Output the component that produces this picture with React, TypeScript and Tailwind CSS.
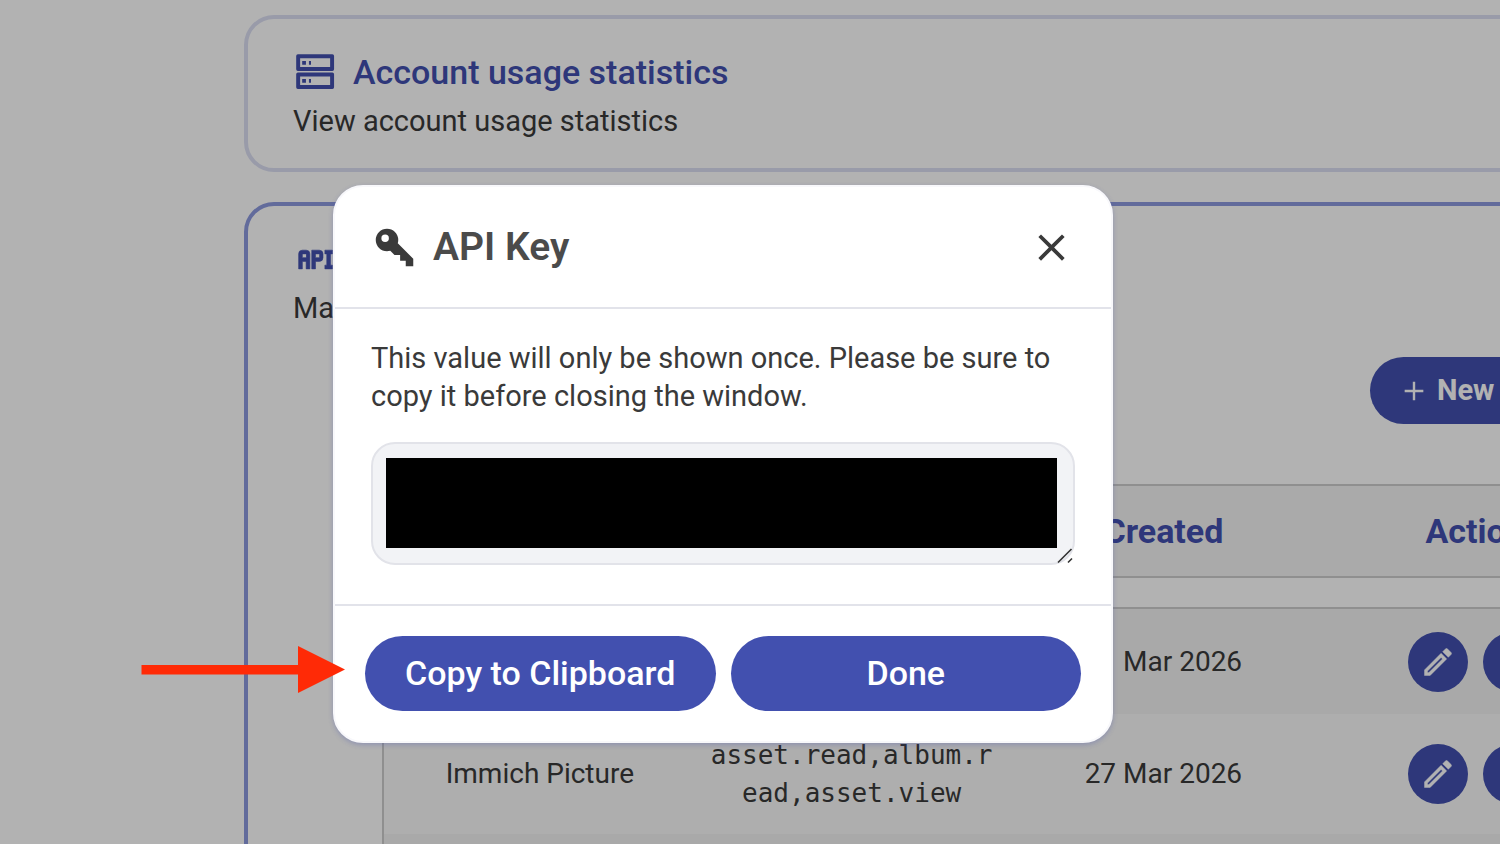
import React from 'react';
import { clsx } from 'clsx';

const ICONS = {
  key: 'M22,18V22H18V19H15V16H12L9.74,13.74C9.19,13.91 8.61,14 8,14A6,6 0 0,1 2,8A6,6 0 0,1 8,2A6,6 0 0,1 14,8C14,8.61 13.91,9.19 13.74,9.74L22,18M7,5A2,2 0 0,0 5,7A2,2 0 0,0 7,9A2,2 0 0,0 9,7A2,2 0 0,0 7,5Z',
  close: 'M19,6.41L17.59,5L12,10.59L6.41,5L5,6.41L10.59,12L5,17.59L6.41,19L12,13.41L17.59,19L19,17.59L13.41,12L19,6.41Z',
  plus: 'M19,12.9H12.9V19H11.1V12.9H5V11.1H11.1V5H12.9V11.1H19V12.9Z',
  pencil: 'M14.06,9L15,9.94L5.92,19H5V18.08L14.06,9M17.66,3C17.41,3 17.15,3.1 16.96,3.29L15.13,5.12L18.88,8.87L20.71,7.04C21.1,6.65 21.1,6 20.71,5.63L18.37,3.29C18.17,3.09 17.92,3 17.66,3M14.06,6.19L3,17.25V21H6.75L17.81,9.94L14.06,6.19Z',
  trash: 'M6,19A2,2 0 0,0 8,21H16A2,2 0 0,0 18,19V7H6V19M8,9H16V19H8V9M15.5,4L14.5,3H9.5L8.5,4H5V6H19V4H15.5Z',
  api: 'M7 7H5A2 2 0 0 0 3 9V17H5V13H7V17H9V9A2 2 0 0 0 7 7M7 11H5V9H7M14 7H10V17H12V13H14A2 2 0 0 0 16 11V9A2 2 0 0 0 14 7M14 11H12V9H14M20 9V15H21V17H17V15H18V9H17V7H21V9Z',
  server: 'M2.6 2.3H21A.9.9 0 0 1 21.9 3.2V10.3A.9.9 0 0 1 21 11.2H2.6A.9.9 0 0 1 1.7 10.3V3.2A.9.9 0 0 1 2.6 2.3M3.8 4.4V9.1H19.8V4.4ZM2.6 12H21A.9.9 0 0 1 21.9 12.9V19.9A.9.9 0 0 1 21 20.8H2.6A.9.9 0 0 1 1.7 19.9V12.9A.9.9 0 0 1 2.6 12M3.8 14.1V18.7H19.8V14.1ZM4.9 5.8H6.9V7.8H4.9ZM8.5 5.8H9.6V7.8H8.5ZM4.9 15.4H6.9V17.4H4.9ZM8.5 15.4H9.6V17.4H8.5Z',
};

const Icon = ({ name, className }: { name: keyof typeof ICONS; className?: string }) => (
  <svg viewBox="0 0 24 24" fill="currentColor" fillRule="evenodd" aria-hidden="true" className={clsx('shrink-0', className)}>
    <path d={ICONS[name]} />
  </svg>
);

const apiKeys = [
  { id: 1, name: 'Immich', permissions: 'all', created: '21 Mar 2026' },
  { id: 2, name: 'Immich Picture', permissions: 'asset.read,album.read,asset.view', created: '27 Mar 2026' },
  { id: 3, name: '', permissions: '', created: '' },
];

type SettingCardProps = {
  icon: keyof typeof ICONS;
  title: string;
  subtitle: string;
  open?: boolean;
  children?: React.ReactNode;
};

const SettingCard = ({ icon, title, subtitle, open, children }: SettingCardProps) => (
  <section
    className={clsx(
      'rounded-[30px] border-4 px-[45px] pt-[31px] pb-7',
      open ? 'border-[#8d9adf]' : 'border-[#dcdff3]'
    )}
  >
    <div className="flex items-center gap-[15px] text-[#4250af]">
      <Icon name={icon} className={clsx('size-[45px]', icon === 'api' && 'stroke-current stroke-[0.3px]')} />
      <h2 className="text-[34px] leading-[45px] font-medium">{title}</h2>
    </div>
    <p className="mt-[7px] text-[29px] leading-[38px]">{subtitle}</p>
    {children}
  </section>
);

const ApiKeyTable = () => (
  <table className="mt-[60px] block w-full text-center">
    <thead className="mb-[29px] block border-2 border-[#cdcdcd] bg-[#f4f4f4] text-[#4250af]">
      <tr className="flex h-[90px] items-center text-[34px]">
        <th className="w-1/4 font-bold">Name</th>
        <th className="w-1/4 font-bold">Permission</th>
        <th className="w-1/4 font-bold">Created</th>
        <th className="w-1/4 font-bold">Action</th>
      </tr>
    </thead>
    <tbody className="block border-2 border-[#cdcdcd]">
      {apiKeys.map((key) => (
        <tr
          key={key.id}
          className="flex min-h-[105px] items-center text-[28px] leading-[38px] odd:bg-[#f3f3f3] even:h-[120px] even:bg-[#f9f9f9]"
        >
          <td className="w-1/4 px-4">{key.name}</td>
          <td className="w-1/4 px-3 font-['DejaVu_Sans_Mono',monospace] text-[26px] break-all">{key.permissions}</td>
          <td className="w-1/4 px-4">{key.created}</td>
          <td className="flex w-1/4 justify-center gap-[15px]">
            <button type="button" aria-label="Edit key" className="flex size-[60px] items-center justify-center rounded-full bg-[#4250af] text-white">
              <Icon name="pencil" className="size-9 stroke-current stroke-[0.3px]" />
            </button>
            <button type="button" aria-label="Delete key" className="flex size-[60px] items-center justify-center rounded-full bg-[#4250af] text-white">
              <Icon name="trash" className="size-9" />
            </button>
          </td>
        </tr>
      ))}
    </tbody>
  </table>
);

const ApiKeyModal = () => (
  <div
    role="dialog"
    aria-labelledby="modal-title"
    className="w-full max-w-[780px] rounded-[30px] border-2 border-[#f8f8fb] bg-white shadow-[0_2px_5px_rgba(66,80,175,0.3)]"
  >
    <header className="flex h-[120px] items-center gap-4 px-[37px]">
      <Icon name="key" className="size-[45px]" />
      <h1 id="modal-title" className="grow text-[39px] leading-[45px] font-semibold text-[#4b4b4b]">API Key</h1>
      <button type="button" aria-label="Close">
        <Icon name="close" className="size-[45px]" />
      </button>
    </header>

    <div className="border-y-2 border-[#e2e3ea] px-9 pt-[30px] pb-[39px]">
      <label htmlFor="secret" className="block text-[29px] leading-[38px]">
        This value will only be shown once. Please be sure to copy it before closing the window.
      </label>
      <div className="relative mt-[27px]">
        <textarea
          id="secret"
          readOnly
          className="block h-[123px] w-full resize-none rounded-3xl border-2 border-[#e2e3e9] bg-[#f2f3f6] outline-none"
        />
        <div className="absolute top-4 right-[18px] bottom-[17px] left-[15px] bg-black" />
        <svg viewBox="0 0 16 16" className="absolute right-[2px] bottom-[1px] size-4" stroke="#333" strokeWidth="1.6" aria-hidden="true">
          <path d="M1 14.500L14.500 1M11 14.500L15 10.500" />
        </svg>
      </div>
    </div>

    <footer className="flex gap-[15px] p-[30px]">
      <button type="button" className="h-[75px] flex-1 rounded-full bg-[#4250af] text-[34px] font-medium text-white">
        Copy to Clipboard
      </button>
      <button type="button" className="h-[75px] flex-1 rounded-full bg-[#4250af] text-[34px] font-medium text-white">
        Done
      </button>
    </footer>
  </div>
);

const App = () => {
  return (
    <div className="relative h-screen overflow-hidden bg-white font-[Roboto,sans-serif] text-[#3a3a3a]">
      {/* settings page, running off the right edge */}
      <main className="-mr-[271px] ml-[244px] flex flex-col gap-[30px] pt-[15px]">
        <SettingCard icon="server" title="Account usage statistics" subtitle="View account usage statistics" />
        <SettingCard icon="api" title="API Keys" subtitle="Manage your API keys" open>
          <div className="mt-[30px] px-[89px]">
            <div className="flex justify-end">
              <button type="button" className="flex h-[67px] w-[263px] items-center gap-[7px] rounded-full bg-[#4250af] pl-7 text-[29px] font-bold text-white">
                <Icon name="plus" className="size-8" />
                New API Key
              </button>
            </div>
            <ApiKeyTable />
          </div>
        </SettingCard>
      </main>

      <div className="absolute inset-0 flex items-start justify-center bg-black/30 pt-[185px] pr-[54px]">
        <ApiKeyModal />
      </div>

      {/* pointer to the copy button */}
      <svg viewBox="0 0 204 48" className="absolute top-[646px] left-[141px] h-12 w-[204px]" fill="#ff2a06" aria-hidden="true">
        <path d="M0.5 19H157V0L204 23.5L157 47V28.500H0.5Z" />
      </svg>
    </div>
  );
};

export default App;
